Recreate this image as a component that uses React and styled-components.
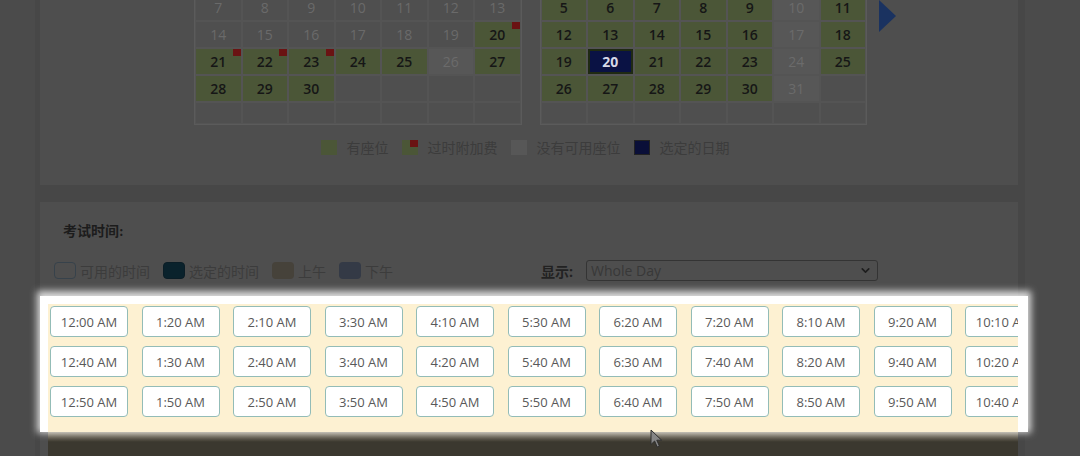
import styled, { createGlobalStyle } from "styled-components"
import { ChevronDown } from "lucide-react"

const buildWeeks = (startCol, days, statusOf) => {
  const cells = []
  for (let i = 0; i < startCol; i++) cells.push(null)
  for (let d = 1; d <= days; d++) cells.push({ day: d, status: statusOf(d) })
  while (cells.length % 7) cells.push(null)
  const weeks = []
  for (let i = 0; i < cells.length; i += 7) weeks.push(cells.slice(i, i + 7))
  weeks.push(Array(7).fill(null))
  return weeks
}

const june = buildWeeks(1, 30, (d) => {
  if (d < 20) return "past"
  if (d <= 23) return "fee"
  if (d === 26) return "full"
  return "open"
})

const july = buildWeeks(3, 31, (d) => {
  if (d === 20) return "picked"
  if (d % 7 === 3) return "full"
  return "open"
})

const weekdays = ["日", "一", "二", "三", "四", "五", "六"]

const slots = [
  "12:00 AM", "12:40 AM", "12:50 AM",
  "1:20 AM", "1:30 AM", "1:50 AM",
  "2:10 AM", "2:40 AM", "2:50 AM",
  "3:30 AM", "3:40 AM", "3:50 AM",
  "4:10 AM", "4:20 AM", "4:50 AM",
  "5:30 AM", "5:40 AM", "5:50 AM",
  "6:20 AM", "6:30 AM", "6:40 AM",
  "7:20 AM", "7:40 AM", "7:50 AM",
  "8:10 AM", "8:20 AM", "8:50 AM",
  "9:20 AM", "9:40 AM", "9:50 AM",
  "10:10 AM", "10:20 AM", "10:40 AM",
  "11:00 AM", "11:20 AM", "11:40 AM",
]

const Month = ({ title, weeks }) => (
  <MonthBox>
    <MonthTitle>{title}</MonthTitle>
    <WeekHead>
      {weekdays.map((w) => <span key={w}>{w}</span>)}
    </WeekHead>
    <Grid>
      {weeks.map((week, wi) => (
        <Week key={wi} $blank={week.every((c) => !c)}>
          {week.map((c, ci) =>
            c ? (
              <Cell key={ci} $status={c.status}>
                {c.day}
                {c.status === "fee" && <FeeMark />}
              </Cell>
            ) : (
              <Cell key={ci} $status="none" />
            )
          )}
        </Week>
      ))}
    </Grid>
  </MonthBox>
)

const App = () => {
  return (
    <Page>
      <GlobalStyle />
      <Column>
        <CalendarPanel>
          <CalRow>
            <ArrowSpacer />
            <Months>
              <Month title="2020年6月" weeks={june} />
              <Month title="2020年7月" weeks={july} />
            </Months>
            <NextArrow />
          </CalRow>
          <DateLegend>
            <DateKey><DateSwatch $kind="open" />有座位</DateKey>
            <DateKey><DateSwatch $kind="open"><FeeMark /></DateSwatch>过时附加费</DateKey>
            <DateKey><DateSwatch $kind="full" />没有可用座位</DateKey>
            <DateKey><DateSwatch $kind="picked" />选定的日期</DateKey>
          </DateLegend>
        </CalendarPanel>

        <TimePanel>
          <Title>考试时间:</Title>
          <ToolRow>
            <TimeLegend>
              <TimeKey><TimeSwatch $kind="free" />可用的时间</TimeKey>
              <TimeKey><TimeSwatch $kind="chosen" />选定的时间</TimeKey>
              <TimeKey><TimeSwatch $kind="am" />上午</TimeKey>
              <TimeKey><TimeSwatch $kind="pm" />下午</TimeKey>
            </TimeLegend>
            <ViewPicker>
              <ViewLabel>显示:</ViewLabel>
              <FakeSelect>
                Whole Day
                <ChevronDown size={13} strokeWidth={3} color="#1e1e1e" />
              </FakeSelect>
            </ViewPicker>
          </ToolRow>
          <Focus>
            <SlotArea>
              {slots.map((s) => <Slot key={s}>{s}</Slot>)}
            </SlotArea>
          </Focus>
          <DimStrip />
        </TimePanel>
      </Column>

      <Cursor width="13" height="20" viewBox="0 0 13 20">
        <path d="M1 1 L1 15.5 L4.6 12 L7.2 18 L9.4 17 L6.8 11.2 L11.6 11.2 Z" fill="#858585" stroke="#2e2e2e" strokeWidth="1" strokeLinejoin="round" />
      </Cursor>
    </Page>
  )
}

export default App

const GlobalStyle = createGlobalStyle`
  html, body { margin: 0; padding: 0; }
  body {
    background: #4b4b4b;
    font-family: "Open Sans", "Noto Sans CJK SC", sans-serif;
  }
`

const Page = styled.div`
  position: relative;
  width: 1080px;
  height: 456px;
  overflow: hidden;
  background: #4b4b4b;
`

const Column = styled.div`
  width: 978px;
  min-height: 640px;
  margin: -96px 0 0 35px;
  padding: 0 7px 0 5px;
  background: #474747;
  display: flex;
  flex-direction: column;
  gap: 17px;
`

const CalendarPanel = styled.section`
  background: #4e4e4e;
  padding: 12px 0 28px;
`

const CalRow = styled.div`
  display: flex;
  justify-content: center;
  align-items: flex-start;
`

const ArrowSpacer = styled.div`
  width: 20px;
  margin-right: 12px;
`

const Months = styled.div`
  display: flex;
  gap: 18px;
`

const NextArrow = styled.div`
  width: 0;
  height: 0;
  margin: 84px 0 0 12px;
  border-top: 16px solid transparent;
  border-bottom: 16px solid transparent;
  border-left: 17px solid #1a3260;
`

const MonthBox = styled.div`
  display: flex;
  flex-direction: column;
`

const MonthTitle = styled.div`
  height: 28px;
  line-height: 28px;
  text-align: center;
  font-weight: 700;
  font-size: 14px;
  color: #222;
`

const WeekHead = styled.div`
  height: 22px;
  display: grid;
  grid-template-columns: repeat(7, 1fr);
  align-items: center;
  text-align: center;
  font-size: 13px;
  color: #333;
`

const Grid = styled.div`
  display: flex;
  flex-direction: column;
  gap: 2px;
  padding: 1px;
  border: 1px solid #5b5b5b;
  background: #545454;
`

const Week = styled.div`
  display: grid;
  grid-template-columns: repeat(7, 44.5px);
  gap: 2px;
  height: ${(p) => (p.$blank ? 20 : 25)}px;
`

const cellLook = {
  none: { bg: "#4f4f4f", fg: "#6b6b6b", w: 400 },
  past: { bg: "#4f4f4f", fg: "#6a6a6a", w: 400 },
  open: { bg: "#4b5637", fg: "#161616", w: 600 },
  fee: { bg: "#4b5637", fg: "#161616", w: 600 },
  full: { bg: "#575757", fg: "#6b6b6b", w: 400 },
  picked: { bg: "#0a1244", fg: "#d6d8e8", w: 700 },
}

const Cell = styled.div`
  position: relative;
  display: flex;
  align-items: center;
  justify-content: center;
  box-sizing: border-box;
  font-size: 14px;
  background: ${(p) => cellLook[p.$status].bg};
  color: ${(p) => cellLook[p.$status].fg};
  font-weight: ${(p) => cellLook[p.$status].w};
  border: ${(p) => (p.$status === "picked" ? "2px solid #1f2a12" : "none")};
`

const FeeMark = styled.span`
  position: absolute;
  top: 0;
  right: 0;
  width: 8px;
  height: 7px;
  background: #6a1313;
`

const DateLegend = styled.div`
  display: flex;
  justify-content: center;
  align-items: center;
  gap: 13px;
  margin-top: 12px;
  padding-right: 8px;
  font-size: 14px;
  color: #3c3c3c;
`

const DateKey = styled.span`
  display: flex;
  align-items: center;
  gap: 10px;
`

const swatchBg = { open: "#4b5637", full: "#575757", picked: "#0a0f38" }

const DateSwatch = styled.span`
  position: relative;
  width: 16px;
  height: 15px;
  box-sizing: border-box;
  background: ${(p) => swatchBg[p.$kind]};
  border: ${(p) => (p.$kind === "picked" ? "1px solid #222" : "none")};
`

const TimePanel = styled.section`
  flex: 1;
  background: #4e4e4e;
  padding: 20px 0 0 8px;
`

const Title = styled.div`
  padding-left: 15px;
  font-family: "Liberation Serif", "Noto Sans CJK SC", serif;
  font-weight: 700;
  font-size: 14px;
  line-height: 20px;
  color: #1c1c1c;
`

const ToolRow = styled.div`
  width: 970px;
  height: 21px;
  margin-top: 18px;
  display: grid;
  grid-template-columns: 1fr 1fr;
  align-items: center;
`

const TimeLegend = styled.div`
  display: flex;
  align-items: center;
  gap: 13px;
  padding-left: 6px;
`

const TimeKey = styled.span`
  display: flex;
  align-items: center;
  gap: 4px;
  font-size: 14px;
  color: #3c3c3c;
`

const timeSwatch = {
  free: "background: transparent; border: 1.5px solid #37424b;",
  chosen: "background: #0a222c; border: 1px solid #0b1d26;",
  am: "background: #46423a;",
  pm: "background: #343a46;",
}

const TimeSwatch = styled.span`
  width: 22px;
  height: 17px;
  box-sizing: border-box;
  border-radius: 4px;
  ${(p) => timeSwatch[p.$kind]}
`

const ViewPicker = styled.div`
  display: flex;
  align-items: center;
  gap: 13px;
  padding-left: 8px;
`

const ViewLabel = styled.span`
  font-weight: 700;
  font-size: 14px;
  color: #222;
`

const FakeSelect = styled.div`
  width: 292px;
  height: 21px;
  box-sizing: border-box;
  display: flex;
  align-items: center;
  justify-content: space-between;
  padding: 0 5px 0 4px;
  border: 1px solid #343434;
  border-radius: 3px;
  font-size: 14px;
  color: #383838;
`

const Focus = styled.div`
  position: relative;
  z-index: 1;
  height: 136px;
  box-sizing: border-box;
  margin: 15px -10px 0 -8px;
  padding: 8px 10px 0 8px;
  background: #ffffff;
  box-shadow: 0 -2px 7px 3px rgba(255, 255, 255, 0.8);
`

const SlotArea = styled.div`
  width: 970px;
  height: 128px;
  box-sizing: border-box;
  padding: 2px 0 0 2px;
  overflow: hidden;
  background: #fdf1d2;
  display: grid;
  grid-auto-flow: column;
  grid-template-rows: repeat(3, 31px);
  grid-auto-columns: 78px;
  gap: 9px 13.5px;
`

const Slot = styled.button`
  box-sizing: border-box;
  height: 31px;
  padding: 0;
  border: 1.5px solid #93bcb7;
  border-radius: 4px;
  background: #ffffff;
  color: #595959;
  font-family: "Open Sans", sans-serif;
  font-size: 13px;
  white-space: nowrap;
  cursor: pointer;
`

const DimStrip = styled.div`
  width: 970px;
  height: 40px;
  background: linear-gradient(to bottom, #8c8471 0, #3b382f 10px);
`

const Cursor = styled.svg`
  position: absolute;
  left: 650px;
  top: 429px;
  z-index: 2;
`
